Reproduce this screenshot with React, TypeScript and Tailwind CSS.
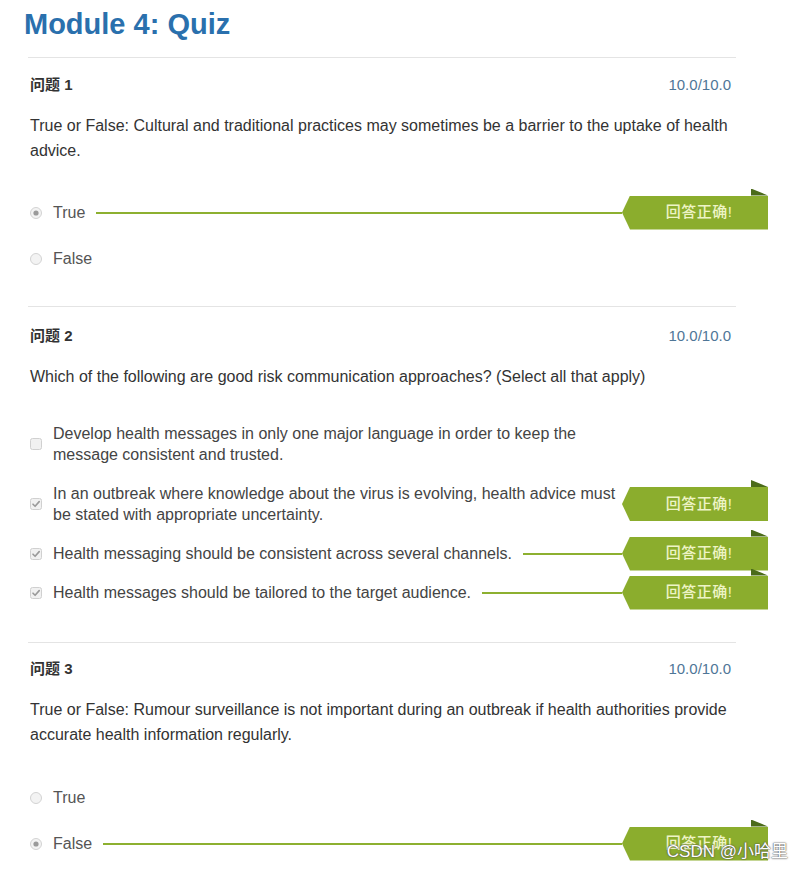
import React from 'react';

type Option = {
  text: string;
  checked?: boolean;
  correct?: boolean;
  line?: boolean;
};

type Question = {
  title: string;
  score: string;
  text: string;
  kind: 'radio' | 'checkbox';
  options: Option[];
};

const questions: Question[] = [
  {
    title: '问题 1',
    score: '10.0/10.0',
    text: 'True or False: Cultural and traditional practices may sometimes be a barrier to the uptake of health advice.',
    kind: 'radio',
    options: [
      { text: 'True', checked: true, correct: true, line: true },
      { text: 'False' },
    ],
  },
  {
    title: '问题 2',
    score: '10.0/10.0',
    text: 'Which of the following are good risk communication approaches? (Select all that apply)',
    kind: 'checkbox',
    options: [
      { text: 'Develop health messages in only one major language in order to keep the message consistent and trusted.' },
      {
        text: 'In an outbreak where knowledge about the virus is evolving, health advice must be stated with appropriate uncertainty.',
        checked: true,
        correct: true,
      },
      { text: 'Health messaging should be consistent across several channels.', checked: true, correct: true, line: true },
      { text: 'Health messages should be tailored to the target audience.', checked: true, correct: true, line: true },
    ],
  },
  {
    title: '问题 3',
    score: '10.0/10.0',
    text: 'True or False: Rumour surveillance is not important during an outbreak if health authorities provide accurate health information regularly.',
    kind: 'radio',
    options: [
      { text: 'True' },
      { text: 'False', checked: true, correct: true, line: true },
    ],
  },
];

const Radio = ({ checked }: { checked?: boolean }) => (
  <svg width="12" height="12" viewBox="0 0 12 12" className="shrink-0">
    <circle cx="6" cy="6" r="5.5" fill="#f3f3f3" stroke="#d2d2d2" />
    {checked && <circle cx="6" cy="6" r="2.6" fill="#9a9a9a" />}
  </svg>
);

const Checkbox = ({ checked }: { checked?: boolean }) => (
  <svg width="12" height="12" viewBox="0 0 12 12" className="shrink-0">
    <rect x="0.5" y="0.5" width="11" height="11" rx="2" fill="#f1f1f1" stroke="#d0d0d0" />
    {checked && <path d="M3 6.2 L5.1 8.3 L9.2 3.6" fill="none" stroke="#9a9a9a" strokeWidth="1.6" strokeLinecap="round" strokeLinejoin="round" />}
  </svg>
);

// green "correct" ribbon with the folded corner on top
const Badge = () => (
  <div className="relative shrink-0 w-[146px] h-[34px] -my-[7px]">
    <div className="absolute right-0 -top-[7px] w-[17px] h-[7px] bg-[#4b6b1a] [clip-path:polygon(0_0,100%_100%,0_100%)]" />
    <div className="h-full bg-[#8bad2d] flex items-center justify-center pl-[8px] [clip-path:polygon(8px_0,100%_0,100%_100%,8px_100%,0_50%)]">
      <span className="text-[15px] font-medium text-[#eef4c6] tracking-[0.5px]">回答正确!</span>
    </div>
  </div>
);

const OptionRow = ({ option, kind }: { option: Option; kind: 'radio' | 'checkbox' }) => (
  <div className="flex items-center -mr-[32px] pl-[2px]">
    {kind === 'radio' ? <Radio checked={option.checked} /> : <Checkbox checked={option.checked} />}
    <span className={`ml-[11px] max-w-[568px] leading-[21px] text-[16px] ${kind === 'radio' ? 'text-[#555]' : 'text-[#444]'}`}>
      {option.text}
    </span>
    {option.line ? <div className="flex-1 h-[2px] ml-[11px] bg-[#8db030]" /> : <div className="flex-1" />}
    {option.correct && <Badge />}
  </div>
);

const sectionPad = ['pt-[17px] pb-[37px]', 'pt-[19px] pb-[39px]', 'pt-[16px] pb-[20px]'];
const optionsTop = ['mt-[39px] gap-[25px]', 'mt-[34px] gap-[18px]', 'mt-[40px] gap-[25px]'];

export default function App() {
  return (
    <div className="relative w-full min-h-[871px] bg-white overflow-hidden font-['Liberation_Sans','Noto_Sans_CJK_SC',sans-serif]">
      <div className="ml-[28px] w-[708px] pt-[7px]">
        <h1 className="-ml-[4px] text-[29px] leading-[34px] font-bold text-[#2a70ad]">Module 4: Quiz</h1>

        <div className="mt-[16px]">
          {questions.map((q, i) => (
            <section key={q.title} className={`border-t border-[#e4e4e4] ${sectionPad[i]}`}>
              <div className="flex justify-between items-center pl-[2px] pr-[5px] leading-[20px] text-[15px]">
                <span className="font-bold text-[#333]">{q.title}</span>
                <span className="text-[#4f7697]">{q.score}</span>
              </div>
              <p className="mt-[18px] pl-[2px] text-[16px] leading-[25px] text-[#333]">{q.text}</p>
              <div className={`flex flex-col ${optionsTop[i]}`}>
                {q.options.map((o) => (
                  <OptionRow key={o.text} option={o} kind={q.kind} />
                ))}
              </div>
            </section>
          ))}
        </div>
      </div>

      <div className="absolute right-[16px] bottom-[10px] text-[17px] text-white [text-shadow:0_0_2px_#555,0_0_1px_#333]">
        CSDN @小哈里
      </div>
    </div>
  );
}
